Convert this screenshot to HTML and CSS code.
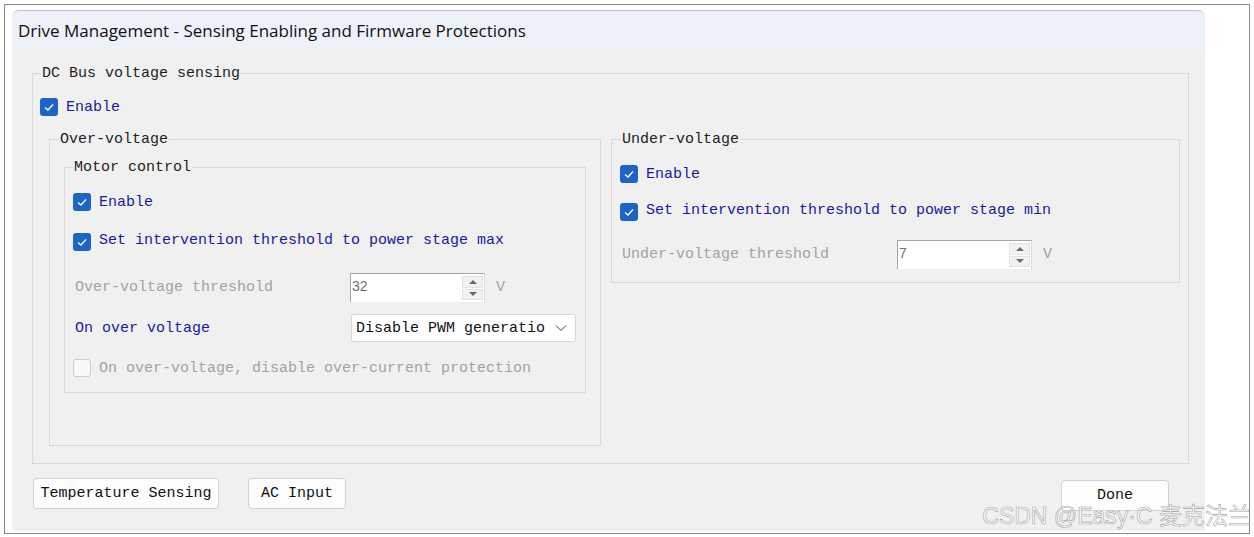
FILE: index.html
```html
<!DOCTYPE html>
<html>
<head>
<meta charset="utf-8">
<link rel="stylesheet" href="styles.css">
</head>
<body>
<div class="frame">
  <div class="window">
    <div class="titlebar">Drive Management - Sensing Enabling and Firmware Protections</div>
    <div class="client">
      <fieldset class="group dc">
        <legend class="lg-dc">DC Bus voltage sensing</legend>
        <div class="dc-content">
          <label class="cb-row"><span class="cb on"><svg viewBox="0 0 18 18"><polyline points="5,9.5 8,12 13,6.5"/></svg></span><span class="blue">Enable</span></label>
          <div class="columns">
            <fieldset class="group over">
              <legend class="lg-ov">Over-voltage</legend>
              <fieldset class="group motor">
                <legend class="lg-mc">Motor control</legend>
                <div class="motor-content">
                  <label class="cb-row"><span class="cb on"><svg viewBox="0 0 18 18"><polyline points="5,9.5 8,12 13,6.5"/></svg></span><span class="blue">Enable</span></label>
                  <label class="cb-row r2"><span class="cb on low"><svg viewBox="0 0 18 18"><polyline points="5,9.5 8,12 13,6.5"/></svg></span><span class="blue">Set intervention threshold to power stage max</span></label>
                  <div class="field-row r3">
                    <span class="flabel gray">Over-voltage threshold</span>
                    <div class="spin"><span class="spin-val">32</span><span class="spin-btns"><span class="sb"><svg viewBox="0 0 10 6"><polygon points="1,5 9,5 5,1"/></svg></span><span class="sb"><svg viewBox="0 0 10 6"><polygon points="1,1 9,1 5,5"/></svg></span></span></div>
                    <span class="unit gray">V</span>
                  </div>
                  <div class="field-row r4">
                    <span class="flabel blue">On over voltage</span>
                    <div class="combo"><span>Disable PWM generatio</span><svg viewBox="0 0 12 8"><polyline points="1,1.5 6,6.5 11,1.5"/></svg></div>
                  </div>
                  <label class="cb-row r5"><span class="cb off"></span><span class="gray">On over-voltage, disable over-current protection</span></label>
                </div>
              </fieldset>
            </fieldset>
            <fieldset class="group under">
              <legend class="lg-ov">Under-voltage</legend>
              <div class="under-content">
                <label class="cb-row"><span class="cb on"><svg viewBox="0 0 18 18"><polyline points="5,9.5 8,12 13,6.5"/></svg></span><span class="blue">Enable</span></label>
                <label class="cb-row u2"><span class="cb on low"><svg viewBox="0 0 18 18"><polyline points="5,9.5 8,12 13,6.5"/></svg></span><span class="blue">Set intervention threshold to power stage min</span></label>
                <div class="field-row u3">
                  <span class="flabel gray">Under-voltage threshold</span>
                  <div class="spin"><span class="spin-val">7</span><span class="spin-btns"><span class="sb"><svg viewBox="0 0 10 6"><polygon points="1,5 9,5 5,1"/></svg></span><span class="sb"><svg viewBox="0 0 10 6"><polygon points="1,1 9,1 5,5"/></svg></span></span></div>
                  <span class="unit gray">V</span>
                </div>
              </div>
            </fieldset>
          </div>
        </div>
      </fieldset>
      <div class="buttons">
        <button class="btn temp">Temperature Sensing</button>
        <button class="btn ac">AC Input</button>
        <button class="btn done">Done</button>
      </div>
    </div>
  </div>
  <div class="watermark">CSDN @Easy·C 麦克法兰</div>
</div>
</body>
</html>
```
FILE: styles.css
```css
* { box-sizing: border-box; }
body {
  margin: 0;
  background: #ffffff;
  font-family: "Liberation Mono", "DejaVu Sans Mono", monospace;
  font-size: 15px;
  color: #1a1a1a;
}
.frame {
  position: relative;
  margin: 4px 0 0 4px;
  width: 1246px;
  height: 530px;
  border: 1px solid #8a8a8a;
  padding: 5px 0 0 7px;
  background: #ffffff;
}
.window {
  width: 1193px;
  height: 521px;
  background: #f0f0f0;
  border-radius: 7px 7px 0 0;
  border-top: 1px solid #c2c2c2;
  overflow: hidden;
  display: flex;
  flex-direction: column;
}
.titlebar {
  height: 39px;
  flex: none;
  background: #edf2f8;
  display: flex;
  align-items: center;
  padding-left: 6px;
  font-family: "Open Sans", "Noto Sans", sans-serif;
  font-size: 17px;
  color: #111;
}
.client {
  padding: 14px 0 0 20px;
}
.group {
  margin: 0;
  padding: 0;
  min-width: 0;
  border: 1px solid #d9d9d9;
}
legend {
  padding: 1px 1px 0;
  line-height: 18px;
  height: 18px;
  color: #1e1e1e;
}
.lg-dc { margin-left: 8px; }
.lg-ov { margin-left: 9px; }
.lg-mc { margin-left: 8px; }
.dc { width: 1157px; }
.dc-content {
  padding: 16px 0 17px 7px;
}
.cb-row {
  display: flex;
  align-items: center;
  height: 18px;
  white-space: nowrap;
}
.cb {
  width: 18px;
  height: 18px;
  flex: none;
  border-radius: 3px;
  margin-right: 8px;
  display: flex;
}
.cb.low { position: relative; top: 2px; }
.cb.on { background: #1c65c4; }
.cb svg { width: 18px; height: 18px; }
.cb polyline { fill: none; stroke: #ffffff; stroke-width: 1.3; }
.cb.off {
  background: #f8f8f8;
  border: 1px solid #cbcbcb;
}
.blue { color: #1a1a9e; }
.gray { color: #a3a3a3; }
.columns {
  display: flex;
  align-items: flex-start;
  gap: 10px;
  margin: 14px 0 0 9px;
}
.over { width: 552px; padding-bottom: 52px; }
.under { width: 569px; }
.motor {
  width: 522px;
  margin: 10px 0 0 14px;
}
.motor-content {
  padding: 17px 0 15px 8px;
}
.under-content {
  padding: 17px 0 13px 8px;
}
.r2 { margin-top: 20px; }
.r3 { margin-top: 24px; }
.r4 { margin-top: 12px; }
.r5 { margin-top: 17px; }
.u2 { margin-top: 18px; }
.u3 { margin-top: 21px; }
.field-row {
  display: flex;
  align-items: center;
  white-space: nowrap;
}
.flabel {
  width: 277px;
  padding-left: 2px;
  flex: none;
}
.spin {
  width: 135px;
  height: 29px;
  background: #ffffff;
  border-top: 1px solid #a5a5a5;
  border-left: 1px solid #a5a5a5;
  border-right: 1px solid #dcdcdc;
  display: flex;
  justify-content: space-between;
}
.spin-val {
  font-family: "Liberation Sans", Arial, sans-serif;
  font-size: 14px;
  color: #707070;
  padding: 4px 0 0 1px;
}
.spin-btns {
  width: 22px;
  display: flex;
  flex-direction: column;
  padding: 2px 1px 2px 0;
  gap: 1px;
}
.sb {
  flex: 1;
  background: #f1f1f1;
  border: 1px solid #e2e2e2;
  display: flex;
  align-items: center;
  justify-content: center;
}
.sb svg { width: 10px; height: 6px; }
.sb polygon { fill: #6a6a6a; }
.unit { margin-left: 11px; }
.combo {
  width: 225px;
  height: 28px;
  margin-left: 1px;
  background: #ffffff;
  border: 1px solid #d6d6d6;
  border-radius: 3px;
  display: flex;
  align-items: center;
  justify-content: space-between;
  padding: 0 8px 0 4px;
  color: #111;
}
.combo svg { width: 12px; height: 8px; }
.combo polyline { fill: none; stroke: #444; stroke-width: 1; }
.buttons {
  display: flex;
  align-items: flex-start;
  margin-top: 14px;
  padding-left: 1px;
}
.btn {
  height: 31px;
  background: #fdfdfd;
  border: 1px solid #d2d2d2;
  border-radius: 4px;
  font-family: "Liberation Mono", "DejaVu Sans Mono", monospace;
  font-size: 15px;
  color: #111;
  padding: 0;
}
.temp { width: 186px; }
.ac { width: 98px; margin-left: 29px; }
.done { width: 108px; margin-left: 715px; margin-top: 2px; }
.watermark {
  position: absolute;
  right: -2px;
  bottom: 2px;
  font-family: "Liberation Sans", "Noto Sans CJK SC", sans-serif;
  font-size: 23px;
  color: rgba(255, 255, 255, 0.85);
  -webkit-text-stroke: 0.6px rgba(120, 120, 120, 0.7);
  white-space: nowrap;
}
```
